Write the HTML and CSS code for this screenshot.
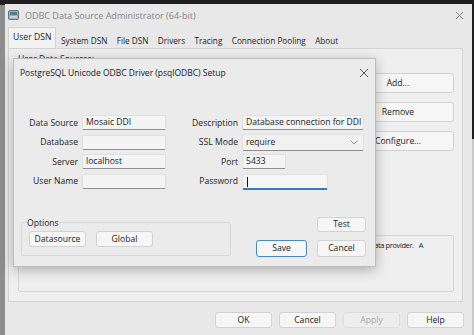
FILE: index.html
```html
<!DOCTYPE html>
<html lang="en">
<head>
  <meta charset="UTF-8" />
  <title>ODBC Data Source Administrator (64-bit)</title>
  <link rel="stylesheet" href="styles.css">
</head>
<body>
  <div class="screen">
    <div class="left-strip"></div>

    <!-- main admin window -->
    <div class="admin-window">
      <div class="titlebar">
        <svg class="app-icon" width="11" height="12" viewBox="0 0 11 12">
          <rect x="0.5" y="1.5" width="10" height="9" rx="1" fill="#a3abb0" stroke="#6b7479" />
          <rect x="2" y="3" width="7" height="3" fill="#4f7f92" />
          <rect x="2" y="7" width="7" height="2" fill="#d2d6d8" />
        </svg>
        <span class="win-title">ODBC Data Source Administrator (64-bit)</span>
        <svg class="close-x" width="9" height="9" viewBox="0 0 9 9">
          <path d="M1 1L8 8M8 1L1 8" stroke="#808080" stroke-width="1" />
        </svg>
      </div>

      <div class="tabs">
        <span class="tab active">User DSN</span>
        <span class="tab">System DSN</span>
        <span class="tab">File DSN</span>
        <span class="tab">Drivers</span>
        <span class="tab">Tracing</span>
        <span class="tab">Connection Pooling</span>
        <span class="tab">About</span>
      </div>

      <div class="panel">
        <div class="panel-top">
          <div class="list-area">
            <div class="list-label">User Data Sources:</div>
          </div>
          <div class="side-buttons">
            <button class="btn side-btn">Add...</button>
            <button class="btn side-btn">Remove</button>
            <button class="btn side-btn">Configure...</button>
          </div>
        </div>
        <div class="info-box">
          <span class="info-text">data provider.</span>
          <span class="info-text">A</span>
        </div>
      </div>

      <div class="footer">
        <button class="btn foot-btn">OK</button>
        <button class="btn foot-btn">Cancel</button>
        <button class="btn foot-btn disabled">Apply</button>
        <button class="btn foot-btn">Help</button>
      </div>
    </div>

    <div class="right-strip"></div>

    <!-- setup dialog on top -->
    <div class="setup-dialog">
      <div class="dlg-titlebar">
        <span class="dlg-title">PostgreSQL Unicode ODBC Driver (psqlODBC) Setup</span>
        <svg class="dlg-close" width="10" height="10" viewBox="0 0 10 10">
          <path d="M1 1L9 9M9 1L1 9" stroke="#444" stroke-width="0.9" />
        </svg>
      </div>

      <div class="fields">
        <label class="lbl">Data Source</label>
        <div class="field">Mosaic DDI</div>
        <span></span>
        <label class="lbl">Description</label>
        <div class="field wide">Database connection for DDI</div>

        <label class="lbl">Database</label>
        <div class="field"></div>
        <span></span>
        <label class="lbl">SSL Mode</label>
        <div class="field wide select">require
          <svg class="chev" width="8" height="5" viewBox="0 0 8 5"><path d="M0.5 0.5L4 4L7.5 0.5" fill="none" stroke="#8a8a8a" /></svg>
        </div>

        <label class="lbl">Server</label>
        <div class="field">localhost</div>
        <span></span>
        <label class="lbl">Port</label>
        <div class="field port">5433</div>

        <label class="lbl">User Name</label>
        <div class="field"></div>
        <span></span>
        <label class="lbl">Password</label>
        <div class="field pass focused"><span class="caret"></span></div>
      </div>

      <div class="dlg-bottom">
        <fieldset class="options">
          <legend>Options</legend>
          <button class="btn opt-btn">Datasource</button>
          <button class="btn opt-btn">Global</button>
        </fieldset>
        <div class="actions">
          <button class="btn act-btn test">Test</button>
          <button class="btn act-btn save">Save</button>
          <button class="btn act-btn">Cancel</button>
        </div>
      </div>
    </div>
  </div>
</body>
</html>
```

FILE: styles.css
```css
body {
  margin: 0;
  background: #202020;
  font-family: 'Open Sans', 'Noto Sans', sans-serif;
  font-size: 8.6px;
  color: #1c1c1c;
  overflow: hidden;
}
.screen {
  position: relative;
  display: flex;
  width: 474px;
  height: 335px;
  padding-top: 4px;
  box-sizing: border-box;
}
.left-strip {
  width: 5px;
  background: #8d8d8d;
  margin-top: 1px;
}
.right-strip {
  flex: 1;
  background: linear-gradient(#1e1e1e 135px, #c9c9c9 135px);
}
.admin-window {
  width: 467px;
  background: #e8e8e8;
  display: flex;
  flex-direction: column;
}

/* title bar */
.titlebar {
  height: 22px;
  display: flex;
  align-items: center;
  padding-left: 3px;
}
.app-icon {
  margin-right: 6px;
}
.win-title {
  color: #858585;
  font-size: 9px;
}
.close-x {
  margin-left: auto;
  margin-right: 8px;
}

/* tabs */
.tabs {
  height: 22px;
  display: flex;
  align-items: flex-end;
  padding-left: 3px;
  font-size: 8.2px;
}
.tab {
  height: 15px;
  line-height: 15px;
  padding: 0 4.7px;
}
.tab.active {
  height: 20px;
  line-height: 18px;
  padding: 0 4px;
  font-size: 8.6px;
  background: #f2f2f2;
  border: 1px solid #d3d3d3;
  border-bottom: none;
}

/* panel */
.panel {
  height: 254px;
  margin: 0 9px 0 3px;
  background: #efefef;
  border: 1px solid #d4d4d4;
  box-sizing: border-box;
  display: flex;
  flex-direction: column;
}
.panel-top {
  display: flex;
}
.list-area {
  flex: 1;
  padding: 4px 0 0 9px;
}
.side-buttons {
  width: 112px;
  margin-right: 8px;
  padding-top: 24px;
  display: flex;
  flex-direction: column;
  gap: 9px;
}
.btn {
  font-family: inherit;
  font-size: inherit;
  color: #1c1c1c;
  background: #f6f6f6;
  border: 1px solid #d2d2d2;
  border-radius: 3px;
  padding: 0;
  margin: 0;
}
.side-btn {
  height: 20px;
}
.info-box {
  margin: auto 8px 9px 9px;
  height: 57px;
  border: 1px solid #d6d6d6;
  border-radius: 2px;
  display: flex;
  justify-content: flex-end;
  gap: 5px;
  overflow: hidden;
  padding: 4px 30px 0 0;
  box-sizing: border-box;
  font-size: 7.5px;
  letter-spacing: -0.4px;
}
.info-text {
  white-space: nowrap;
}

/* footer */
.footer {
  display: flex;
  justify-content: flex-end;
  gap: 7px;
  padding: 10px 8px 0 0;
}
.foot-btn {
  width: 57px;
  height: 16px;
}
.foot-btn.disabled {
  color: #a5a5a5;
  background: #ededed;
  border-color: #dddddd;
}

/* setup dialog */
.setup-dialog {
  position: absolute;
  left: 13px;
  top: 58px;
  width: 363px;
  height: 209px;
  box-sizing: border-box;
  background: #ebebeb;
  border: 1px solid #bcbcbc;
  box-shadow: 0 3px 12px rgba(0, 0, 0, 0.28);
}
.dlg-titlebar {
  height: 27px;
  display: flex;
  align-items: center;
  padding-left: 6px;
}
.dlg-title {
  font-size: 8.5px;
  color: #1a1a1a;
}
.dlg-close {
  margin-left: auto;
  margin-right: 6px;
}
.fields {
  margin-top: 29px;
  padding-left: 8px;
  display: grid;
  grid-template-columns: 56px 84px 18px 46px 122px;
  grid-auto-rows: 15px;
  column-gap: 4px;
  row-gap: 4.5px;
  align-items: center;
}
.lbl {
  text-align: right;
}
.field {
  height: 15px;
  line-height: 13px;
  box-sizing: border-box;
  padding: 0 3px;
  background: #f4f4f4;
  border: 1px solid #e0e0e0;
  border-bottom-color: #8e8e8e;
  border-radius: 2px;
  position: relative;
  white-space: nowrap;
}
.field.select {
  height: 17px;
  line-height: 15px;
  background: #f1f1f1;
}
.chev {
  position: absolute;
  right: 5px;
  top: 5px;
}
.field.port {
  width: 44px;
}
.field.pass {
  width: 86px;
  height: 16px;
  margin-top: 2px;
}
.field.focused {
  background: #f6f6f6;
  border-bottom: 2px solid #3b78b4;
}
.caret {
  position: absolute;
  left: 4px;
  top: 2px;
  width: 1px;
  height: 10px;
  background: #111;
}
.dlg-bottom {
  display: flex;
  margin-top: 28px;
}
.options {
  width: 210px;
  height: 39px;
  box-sizing: border-box;
  margin: 0 0 0 7px;
  padding: 2px 0 0 7px;
  border: 1px solid #d8d8d8;
  border-radius: 2px;
  display: flex;
  gap: 10px;
  align-items: flex-start;
}
.options legend {
  padding: 0;
  margin-left: -2px;
}
.opt-btn {
  width: 57px;
  height: 16px;
}
.actions {
  margin-left: auto;
  margin-right: 9px;
  display: grid;
  grid-template-columns: 51px 49px;
  grid-template-rows: 15px 17px;
  column-gap: 10px;
  row-gap: 8px;
}
.act-btn.test {
  grid-column: 2;
}
.act-btn.save {
  border: 1.5px solid #4c88c6;
}
```
